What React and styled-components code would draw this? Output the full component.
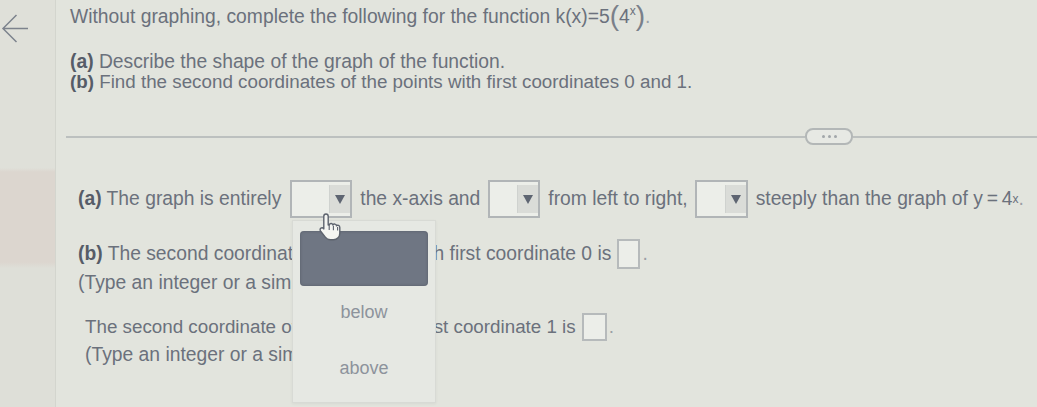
import React from "react";
import styled, { createGlobalStyle } from "styled-components";

const Global = createGlobalStyle`
  html, body { margin: 0; padding: 0; }
  body {
    width: 1037px; height: 407px; overflow: hidden;
    background: #e2e4dd;
    font-family: "Liberation Sans", Arial, sans-serif;
    color: #6b717c;
  }
`;

const Page = styled.div`
  display: flex;
  width: 1037px;
  height: 407px;
  overflow: hidden;
`;

const Rail = styled.div`
  width: 56px;
  flex-shrink: 0;
  border-right: 1px solid #d3d5ce;
  background: linear-gradient(to bottom, #dfe0d9 0, #dfe0d9 168px, #dcd6cf 172px, #dcd6cf 262px, #dedfd8 268px);
  padding: 13px 0 0 1px;
  box-sizing: border-box;
`;

const Main = styled.div`
  flex: 1;
  display: flex;
  flex-direction: column;
  padding-top: 6px;
`;

const Header = styled.div`
  padding-left: 14px;
  font-size: 19.3px;
  line-height: 20px;
`;

const Title = styled.div`
  line-height: 22px;
  margin-bottom: 24px;
`;

const Line = styled.div`
  line-height: 20px;
  font-size: ${(p) => p.$fs || 19.3}px;
`;

const B = styled.b`
  color: #565c68;
`;

const Big = styled.span`
  font-size: 28px;
  line-height: 0;
  vertical-align: -2px;
  color: #7a808a;
`;

const Sup = styled.sup`
  font-size: 12px;
  vertical-align: 8px;
  line-height: 0;
`;

const DividerRow = styled.div`
  margin-top: 36px;
  margin-left: 10px;
  display: flex;
  align-items: center;
`;

const Rule = styled.div`
  height: 2px;
  background: #bcc0bf;
  flex: ${(p) => p.$grow};
`;

const Pill = styled.div`
  width: 44px;
  height: 13px;
  border: 2px solid #b3b7b7;
  border-radius: 8px;
  background: #e7e9e4;
  display: flex;
  align-items: center;
  justify-content: center;
  gap: 3px;
`;

const Dot = styled.span`
  width: 3px;
  height: 3px;
  border-radius: 50%;
  background: #a2a7aa;
`;

const Answers = styled.div`
  position: relative;
  padding-left: 22px;
  padding-top: 35px;
  font-size: 19.3px;
`;

const Row = styled.div`
  display: flex;
  align-items: center;
  white-space: pre;
  height: ${(p) => p.$h || 22}px;
  margin-top: ${(p) => p.$mt || 0}px;
  padding-left: ${(p) => p.$indent || 0}px;
  font-size: ${(p) => p.$fs || 19.3}px;
`;

const Select = styled.span`
  display: inline-flex;
  width: ${(p) => p.$w}px;
  height: 38px;
  border: 2px solid #b1b5b7;
  background: #eceee9;
  box-sizing: border-box;
  margin: 0 ${(p) => p.$mr || 8}px 0 ${(p) => p.$ml || 8}px;
  padding: 3px 0;
  justify-content: flex-end;
`;

const Arrow = styled.span`
  width: 20px;
  background: #dadcd8;
  border-left: 1px solid #cfd2cf;
  display: flex;
  align-items: center;
  justify-content: center;
  &::after {
    content: "";
    border-left: 5px solid transparent;
    border-right: 5px solid transparent;
    border-top: 9px solid #5e6572;
  }
`;

const AnswerBox = styled.span`
  display: inline-block;
  width: ${(p) => p.$w}px;
  height: ${(p) => p.$h}px;
  border: 2px solid #b6babb;
  background: #eceee9;
  box-sizing: border-box;
  margin: 0 2px 0 6px;
`;

const Menu = styled.div`
  position: absolute;
  left: 236px;
  top: 75px;
  width: 144px;
  height: 183px;
  background: #e6e8e3;
  border: 1px solid #d8dad5;
  box-shadow: 0 1px 3px rgba(0,0,0,0.05);
  box-sizing: border-box;
  padding: 10px 7px;
  display: flex;
  flex-direction: column;
`;

const MenuItem = styled.div`
  height: ${(p) => p.$h}px;
  flex-shrink: 0;
  border-radius: 4px;
  display: flex;
  align-items: center;
  justify-content: center;
  font-size: 18px;
  color: #8d939c;
  background: ${(p) => (p.$active ? "#6f7683" : "transparent")};
  box-shadow: ${(p) => (p.$active ? "inset 0 0 3px rgba(60,66,78,0.5)" : "none")};
  padding-bottom: ${(p) => p.$pb || 0}px;
  box-sizing: border-box;
`;

const Cursor = styled.svg`
  position: absolute;
  left: 261px;
  top: 67px;
`;

const Period = styled.span`
  color: #9aa0a6;
`;

export default function App() {
  return (
    <>
      <Global />
      <Page>
        <Rail>
          <svg width="28" height="31" viewBox="0 0 28 31">
            <path d="M27 15.5H2M15.5 2L2 15.5l13.5 13.5" fill="none" stroke="#7d838d" strokeWidth="1.5" />
          </svg>
        </Rail>
        <Main>
          <Header>
            <Title>
              Without graphing, complete the following for the function k(x)=5<Big>(</Big>4<Sup>x</Sup><Big>)</Big>
              <Period>.</Period>
            </Title>
            <Line>
              <B>(a)</B> Describe the shape of the graph of the function.
            </Line>
            <Line $fs={18.8}>
              <B>(b)</B> Find the second coordinates of the points with first coordinates 0 and 1.
            </Line>
          </Header>
          <DividerRow>
            <Rule $grow="0 0 739px" />
            <Pill>
              <Dot />
              <Dot />
              <Dot />
            </Pill>
            <Rule $grow="1" />
          </DividerRow>
          <Answers>
            <Row $h={38}>
              <B>(a)</B> The graph is entirely
              <Select $w={62} $ml={9}>
                <Arrow />
              </Select>
              the x-axis and
              <Select $w={52}>
                <Arrow />
              </Select>
              from left to right,
              <Select $w={53} $ml={7}>
                <Arrow />
              </Select>
              {"steeply than the graph of y\u2009=\u20094"}
              <Sup>x</Sup>
              <Period>.</Period>
            </Row>
            <Row $mt={20} $h={32}>
              <B>(b)</B> The second coordinate of the point with first coordinate 0 is
              <AnswerBox $w={23} $h={30} />
              <Period>.</Period>
            </Row>
            <Row $mt={2} $h={22}>(Type an integer or a simplified fraction.)</Row>
            <Row $mt={19} $h={28} $indent={7} $fs={18.8}>
              The second coordinate of the point with first coordinate 1 is
              <AnswerBox $w={25} $h={28} />
              <Period>.</Period>
            </Row>
            <Row $mt={3} $h={22} $indent={7}>
              (Type an integer or a simplified fraction.)
            </Row>
            <Menu>
              <MenuItem $active $h={55} />
              <MenuItem $h={57} $pb={4}>below</MenuItem>
              <MenuItem $h={55} $pb={4}>above</MenuItem>
            </Menu>
            <Cursor width="28" height="30" viewBox="0 0 28 30">
              <path
                d="M9 2c1.3 0 2.2 1 2.2 2.2V13l1-.2c.4-1 1.2-1.4 2.1-1.3.9.1 1.5.7 1.6 1.5.5-.8 1.3-1.1 2.1-.9.9.2 1.4.9 1.5 1.7.5-.5 1.3-.7 2-.4.9.4 1.3 1.2 1.3 2.2v5.6c0 3.6-2.6 6.6-6.3 6.6h-3.2c-2.1 0-3.8-1-5-2.6L3.5 19c-.7-1-.5-2.2.4-2.8.9-.6 2-.4 2.7.4l.2.3V4.2C6.8 3 7.7 2 9 2z"
                fill="#f4f5f2"
                stroke="#5c626d"
                strokeWidth="1.4"
                strokeLinejoin="round"
              />
              <path d="M12.2 13v5M16.4 13.8v4.5M20.6 15v3.5" stroke="#5c626d" strokeWidth="1.1" />
            </Cursor>
          </Answers>
        </Main>
      </Page>
    </>
  );
}
